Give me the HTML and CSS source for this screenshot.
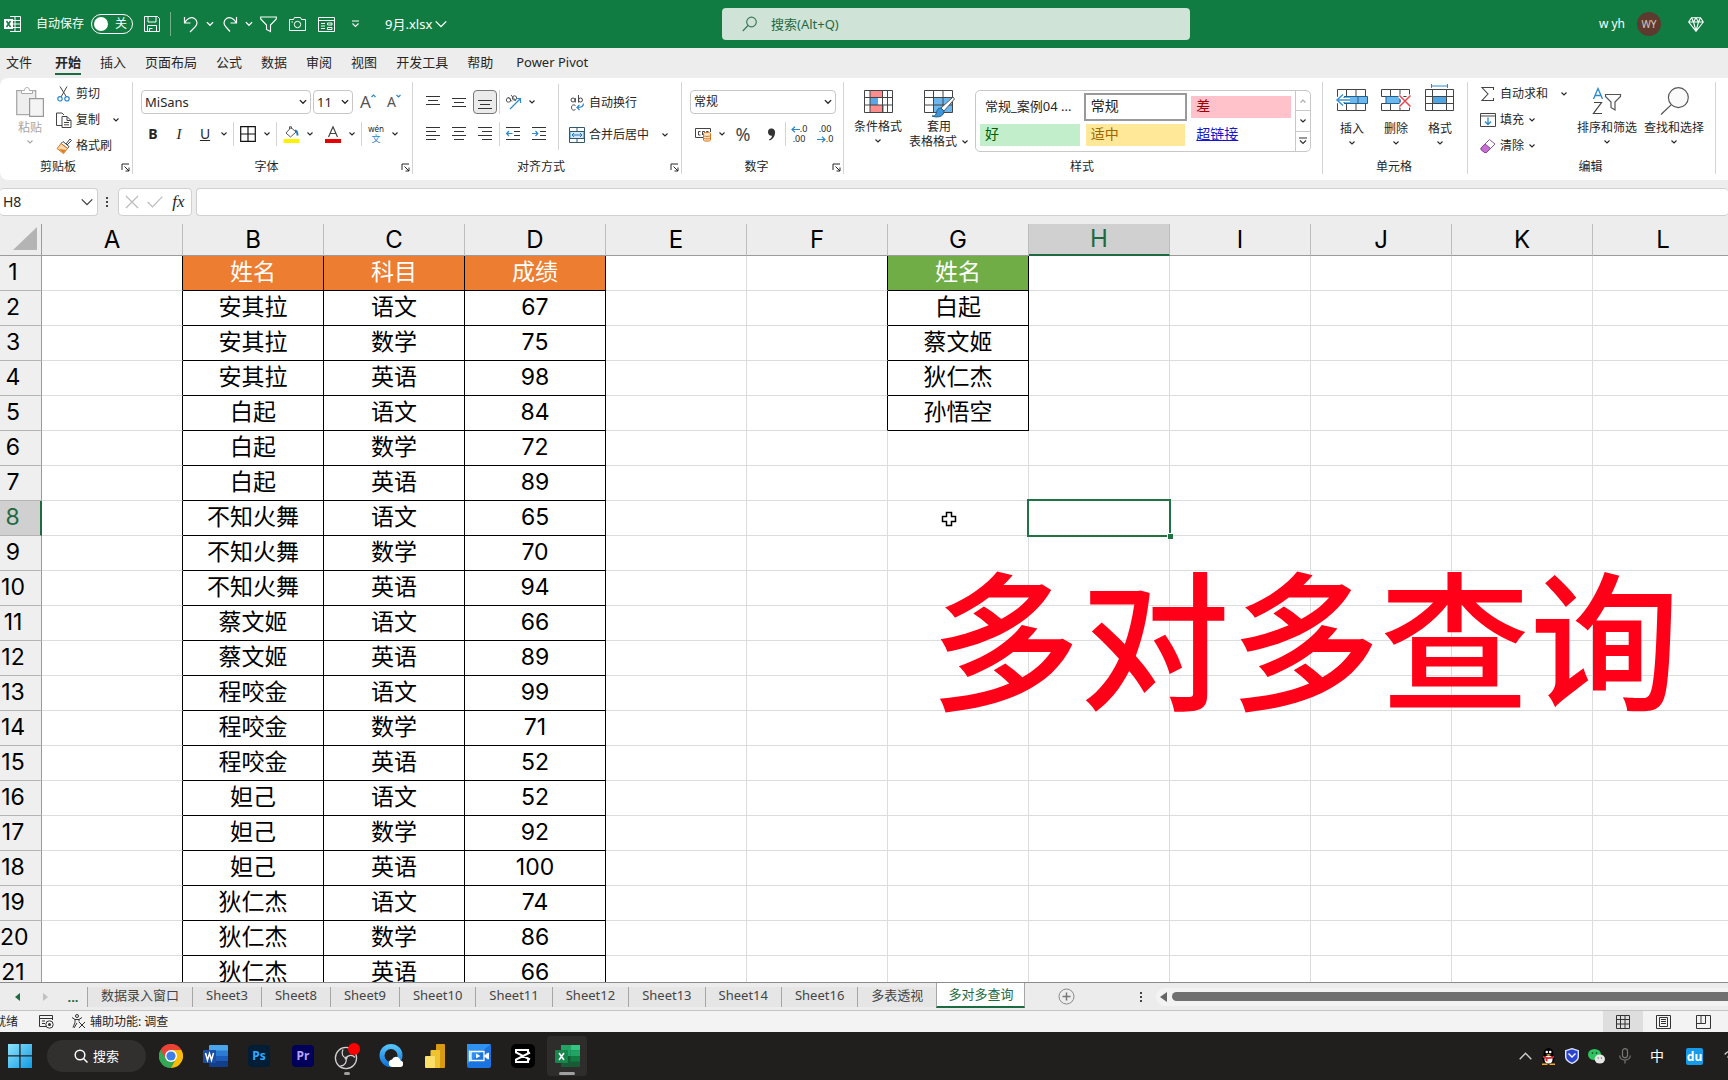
FILE: index.html
```
<!DOCTYPE html>
<html lang="zh-CN">
<head>
    <meta charset="UTF-8">
    <meta name="viewport" content="width=device-width, initial-scale=1.0">
    <title>9月.xlsx - Excel</title>
    <link rel="stylesheet" href="styles.css">
</head>
<body>

    <!-- Shared icon shapes -->
    <svg class="defs" width="0" height="0" aria-hidden="true">
        <symbol id="caret" viewBox="0 0 8 8"><path d="M1.500 2.500L4 5l2.500-2.500" fill="none" stroke="currentColor" stroke-width="1.100"/></symbol>
        <symbol id="launcher" viewBox="0 0 9 9"><path d="M1 7V1h7M3.500 3.500L8 8M8 4.500V8H4.500" fill="none" stroke="currentColor"/></symbol>
    </svg>

    <!-- Title bar -->
    <header class="title-bar">
        <svg class="app-logo" width="17" height="16" viewBox="0 0 17 16"><path d="M6 .5h10.500v15H6M6 4.500h10M6 8h10M6 11.500h10M11 .5v15" fill="none" stroke="#fff"/><path d="M0 3h9v10H0z" fill="#fff"/><path d="M2.500 5l4 6M6.500 5l-4 6" stroke="#107c41" stroke-width="1.500"/></svg>
        <label class="autosave">自动保存
            <input type="checkbox" class="autosave-box">
            <span class="toggle"><span class="knob"></span>关</span>
        </label>
        <div class="quick-access">
            <button aria-label="保存" class="qa save"><svg width="16" height="16" viewBox="0 0 16 16"><path d="M.5.500h13l2 2v13H.5zM4 .5V6h8V.5M3.500 15.500v-6h9v6M5.500 15.500v-3h3" fill="none" stroke="#fff"/></svg></button>
            <span class="qa-sep"></span>
            <button aria-label="撤消" class="qa"><svg width="16" height="17" viewBox="0 0 16 17"><path d="M1.500 1v6h6M1.500 7C4 2.500 8 .5 11.500 2.500c3.500 2.500 3 6 .5 8.500l-5 5" fill="none" stroke="#fff" stroke-width="1.200"/></svg></button>
            <button aria-label="撤消选项" class="qa-caret"><svg width="10" height="10" viewBox="0 0 8 8"><use href="#caret"/></svg></button>
            <button aria-label="恢复" class="qa"><svg width="16" height="17" viewBox="0 0 16 17"><path d="M14.500 1v6h-6M14.500 7C12 2.500 8 .5 4.500 2.500 1 5 1.500 8.500 4 11l4 4.500" fill="none" stroke="#fff" stroke-width="1.200"/></svg></button>
            <button aria-label="恢复选项" class="qa-caret"><svg width="10" height="10" viewBox="0 0 8 8"><use href="#caret"/></svg></button>
            <button aria-label="筛选" class="qa"><svg width="17" height="17" viewBox="0 0 17 17"><path d="M.7 1h15.600v2L10.500 9v6.500l-4-2V9L.7 3z" fill="none" stroke="#fff" stroke-width="1.100"/></svg></button>
            <button aria-label="照相机" class="qa"><svg width="17" height="14" viewBox="0 0 17 14"><path d="M.5 2.500h4l1-2h6l1 2h4v11H.5zM2.500 5h1.500" fill="none" stroke="#fff"/><circle cx="8.500" cy="7.500" r="3.200" fill="none" stroke="#fff"/></svg></button>
            <button aria-label="记录单" class="qa"><svg width="17" height="15" viewBox="0 0 17 15"><path d="M.5.500h16v14H.5zM.5 3.500h16M3 6.500h4M3 9h4M3 11.500h4M9.500 6h4.500v2H9.500zM9.500 10.500h4.500v2H9.500z" fill="none" stroke="#fff"/></svg></button>
            <button aria-label="自定义快速访问工具栏" class="qa"><svg width="9" height="8" viewBox="0 0 9 8"><path d="M1 1h7M1.500 3.500l3 3 3-3" fill="none" stroke="#fff" stroke-width="1.100"/></svg></button>
        </div>
        <button class="file-name">9月.xlsx <svg width="14" height="14" viewBox="0 0 8 8"><path d="M1 2.500l3 3 3-3" fill="none" stroke="#fff" stroke-width=".8"/></svg></button>
        <div class="search-wrap">
            <svg width="16" height="16" viewBox="0 0 16 16"><circle cx="9.500" cy="6" r="4.800" fill="none" stroke="#3a7c58" stroke-width="1.200"/><path d="M6 9.500L.8 15" stroke="#3a7c58" stroke-width="1.200"/></svg>
            <input type="search" class="search-box" aria-label="搜索" placeholder="搜索(Alt+Q)">
        </div>
        <div class="account">
            <span class="user">w yh</span>
            <span class="avatar">WY</span>
            <svg width="16" height="15" viewBox="0 0 16 15"><path d="M3.500.700h9L15.300 5 8 14.300.7 5zM.7 5h14.600M5.500 5L8 14M10.500 5L8 14M3.500.700L5.500 5 8 .7 10.500 5l2-4.300" fill="none" stroke="#fff" stroke-width="1.100"/></svg>
        </div>
    </header>

    <!-- Ribbon tabs -->
    <nav class="ribbon-tabs">
        <a href="#file" class="file-tab">文件</a>
        <a href="#home" class="active">开始</a>
        <a href="#insert">插入</a>
        <a href="#layout">页面布局</a>
        <a href="#formulas">公式</a>
        <a href="#data">数据</a>
        <a href="#review">审阅</a>
        <a href="#view">视图</a>
        <a href="#dev">开发工具</a>
        <a href="#help" class="help-tab">帮助</a>
        <a href="#pivot">Power Pivot</a>
    </nav>

    <!-- Ribbon -->
    <section class="ribbon">

        <div class="group clipboard">
            <div class="group-body">
                <button class="big-button paste" disabled>
                    <svg width="28" height="30" viewBox="0 0 28 30"><path d="M.7 3.700h19v24H.7z" fill="#eee" stroke="#aaa" stroke-width="1.300"/><path d="M5.500 6.500v-3h3c0-4 5-4 5 0h3v3z" fill="#fff" stroke="#aaa"/><path d="M13.600 11.600h13.800v17.800H13.600z" fill="#f4f4f4" stroke="#999" stroke-width="1.200"/></svg>
                    <span>粘贴</span>
                    <svg width="8" height="8"><use href="#caret"/></svg>
                </button>
                <div class="stack">
                    <button class="text-button"><svg width="16" height="16" viewBox="0 0 16 16"><path d="M4 .5l6.500 10.500M11 .5L5 11" stroke="#444" fill="none"/><circle cx="4" cy="12.800" r="2.200" fill="none" stroke="#2b88c9" stroke-width="1.200"/><circle cx="11" cy="12.800" r="2.200" fill="none" stroke="#2b88c9" stroke-width="1.200"/></svg>剪切</button>
                    <button class="text-button"><svg width="16" height="16" viewBox="0 0 16 16"><path d="M6 13.500H.5V1H6l2 2M6 4.500h5l4 4v7H6zM11 4.500v4h4M8 10.500h5M8 12.800h5" fill="none" stroke="#444"/></svg>复制<svg class="far" width="8" height="8"><use href="#caret"/></svg></button>
                    <button class="text-button"><svg width="16" height="16" viewBox="0 0 16 16"><path d="M10 6l4-5 1.500 1.500L11 7" fill="#fff" stroke="#444"/><path d="M7 3.500l6 5-1.500 2-6.500-5z" fill="#fff" stroke="#444"/><path d="M5 5.500l6.500 5-4 5L1 10.500C2.500 9 4 7 5 5.500z" fill="#fbd9b0" stroke="#d8741a"/><path d="M3 11l4.500 4 2.500-3z" fill="#e07b1c"/></svg>格式刷</button>
                </div>
            </div>
            <div class="group-name"><span>剪贴板</span><button aria-label="剪贴板设置"><svg width="9" height="9"><use href="#launcher"/></svg></button></div>
        </div>

        <div class="group font">
            <div class="group-body rows">
                <div class="row">
                    <span class="combo font-name"><select aria-label="字体"><option>MiSans</option></select><svg width="10" height="10" viewBox="0 0 8 8"><use href="#caret"/></svg></span>
                    <span class="combo font-size"><select aria-label="字号"><option>11</option></select><svg width="10" height="10" viewBox="0 0 8 8"><use href="#caret"/></svg></span>
                    <button class="icon-button grow" aria-label="增大字号"><span class="letter large">A</span><svg width="5" height="4" viewBox="0 0 5 4"><path d="M.5 3l2-2 2 2" fill="none" stroke="#2b88c9" stroke-width="1.200"/></svg></button>
                    <button class="icon-button grow" aria-label="减小字号"><span class="letter">A</span><svg width="5" height="4" viewBox="0 0 5 4"><path d="M.5 1l2 2 2-2" fill="none" stroke="#2b88c9" stroke-width="1.200"/></svg></button>
                </div>
                <div class="row">
                    <button class="icon-button bold">B</button>
                    <button class="icon-button italic">I</button>
                    <button class="icon-button underline">U</button>
                    <button class="drop" aria-label="下划线选项"><svg width="8" height="8"><use href="#caret"/></svg></button>
                    <span class="sep"></span>
                    <button class="icon-button" aria-label="边框"><svg width="16" height="16" viewBox="0 0 16 16"><path d="M.7.700h14.600v14.600H.7zM8 1v14M1 8h14" fill="none" stroke="#111" stroke-width="1.200"/></svg></button>
                    <button class="drop" aria-label="边框选项"><svg width="8" height="8"><use href="#caret"/></svg></button>
                    <span class="sep"></span>
                    <button class="icon-button" aria-label="填充颜色"><svg width="17" height="17" viewBox="0 0 17 17"><path d="M3 7l5-5.500L13 6l-5.500 5zM6.500 3V.8h2v2" fill="#fff" stroke="#555"/><path d="M12 4.500c2 0 2.500 2 2.500 5" fill="none" stroke="#2b78b8" stroke-width="2"/><path d="M.5 13h16v4H.5z" fill="#fff200"/></svg></button>
                    <button class="drop" aria-label="填充颜色选项"><svg width="8" height="8"><use href="#caret"/></svg></button>
                    <button class="icon-button font-color" aria-label="字体颜色"><svg width="16" height="17" viewBox="0 0 16 17"><path d="M3.500 11L8 .8 12.500 11M5 7.500h6" fill="none" stroke="#444" stroke-width="1.200"/><path d="M0 13h16v4H0z" fill="#e60000"/></svg></button>
                    <button class="drop" aria-label="字体颜色选项"><svg width="8" height="8"><use href="#caret"/></svg></button>
                    <span class="sep"></span>
                    <button class="icon-button phonetic"><span>wén</span><span class="blue">文</span></button>
                    <button class="drop" aria-label="拼音选项"><svg width="8" height="8"><use href="#caret"/></svg></button>
                </div>
            </div>
            <div class="group-name"><span>字体</span><button aria-label="字体设置"><svg width="9" height="9"><use href="#launcher"/></svg></button></div>
        </div>

        <div class="group align">
            <div class="group-body">
                <div class="rows align-icons">
                    <div class="row">
                        <button class="icon-button" aria-label="顶端对齐"><svg width="14" height="16" viewBox="0 0 14 16"><path d="M0 2.500h14M2 6.500h10M0 10.500h14" stroke="#333"/></svg></button>
                        <button class="icon-button" aria-label="垂直居中"><svg width="14" height="16" viewBox="0 0 14 16"><path d="M0 4.500h14M2 8.500h10M0 12.500h14" stroke="#333"/></svg></button>
                        <button class="icon-button pressed" aria-label="底端对齐"><svg width="14" height="16" viewBox="0 0 14 16"><path d="M0 6.500h14M2 10.500h10M0 14.500h14" stroke="#333"/></svg></button>
                        <span class="sep"></span>
                        <button class="icon-button" aria-label="方向"><svg width="17" height="16" viewBox="0 0 17 16"><g fill="none" stroke="#555"><circle cx="3.500" cy="6" r="2.200"/><path d="M3 3l4 4.500M6 1l5 6"/><circle cx="9.500" cy="4" r="2.200"/></g><path d="M5 15L15.500 4.500M11 4.500h4.500V9" fill="none" stroke="#2b88c9" stroke-width="1.200"/></svg></button>
                        <button class="drop" aria-label="方向选项"><svg width="8" height="8"><use href="#caret"/></svg></button>
                    </div>
                    <div class="row">
                        <button class="icon-button" aria-label="左对齐"><svg width="14" height="14" viewBox="0 0 14 14"><path d="M0 .5h14M0 4.500h10M0 8.500h14M0 12.500h10" stroke="#333"/></svg></button>
                        <button class="icon-button" aria-label="居中"><svg width="14" height="14" viewBox="0 0 14 14"><path d="M0 .5h14M2 4.500h10M0 8.500h14M2 12.500h10" stroke="#333"/></svg></button>
                        <button class="icon-button" aria-label="右对齐"><svg width="14" height="14" viewBox="0 0 14 14"><path d="M0 .5h14M4 4.500h10M0 8.500h14M4 12.500h10" stroke="#333"/></svg></button>
                        <span class="sep"></span>
                        <button class="icon-button" aria-label="减少缩进量"><svg width="14" height="14" viewBox="0 0 14 14"><path d="M0 .5h14M8 4.500h6M8 8.500h6M0 12.500h14" stroke="#333"/><path d="M6.500 6.500h-6M3 4L.7 6.500 3 9" fill="none" stroke="#2b88c9" stroke-width="1.200"/></svg></button>
                        <button class="icon-button" aria-label="增加缩进量"><svg width="14" height="14" viewBox="0 0 14 14"><path d="M0 .5h14M8 4.500h6M8 8.500h6M0 12.500h14" stroke="#333"/><path d="M0 6.500h6M3.500 4l2.300 2.500L3.500 9" fill="none" stroke="#2b88c9" stroke-width="1.200"/></svg></button>
                    </div>
                </div>
                <div class="rows wrap-merge">
                    <button class="text-button"><svg width="16" height="16" viewBox="0 0 16 16"><g fill="none" stroke="#444"><circle cx="4" cy="5" r="2"/><path d="M6.300 3v4.500M9.500 0v7.500M6.500 10.500c-2-1.500-4.500 0-4 2.500s2.500 2.500 4 1.500"/><circle cx="11.500" cy="5" r="2"/></g><path d="M14.500 8.500c0 3-2 4-6 4M10.500 10L8 12.500l2.500 2.500" fill="none" stroke="#2b88c9" stroke-width="1.200"/></svg>自动换行</button>
                    <button class="text-button"><svg width="16" height="16" viewBox="0 0 16 16"><path d="M1 4.500h14v7H1z" fill="#d3eafa" stroke="#2b88c9"/><path d="M.5.500h15v15H.5zM.5 4.500h15M.5 11.500h15M8 .5v4M8 11.500v4" fill="none" stroke="#33586e"/><path d="M3 8h10M5 6L3 8l2 2M11 6l2 2-2 2" fill="none" stroke="#2b78b8"/></svg>合并后居中<svg class="far" width="8" height="8"><use href="#caret"/></svg></button>
                </div>
            </div>
            <div class="group-name"><span>对齐方式</span><button aria-label="对齐设置"><svg width="9" height="9"><use href="#launcher"/></svg></button></div>
        </div>

        <div class="group number">
            <div class="group-body rows">
                <div class="row">
                    <span class="combo number-format"><select aria-label="数字格式"><option>常规</option></select><svg width="10" height="10" viewBox="0 0 8 8"><use href="#caret"/></svg></span>
                </div>
                <div class="row">
                    <button class="icon-button" aria-label="会计数字格式"><svg width="17" height="15" viewBox="0 0 17 15"><path d="M8 10.500H.5v-9h15V5M5.500 4.500H3.500v3.500h2M7.500 8V4.500h2V8M11.500 6V4.500h2" fill="none" stroke="#444"/><path d="M8.500 6.500c0-1.500 7-1.500 7 0v6.500c0 1.500-7 1.500-7 0z" fill="#fce4c8" stroke="#d8741a"/><path d="M8.500 8.500c0 1.200 7 1.200 7 0M8.500 11c0 1.200 7 1.200 7 0" fill="none" stroke="#d8741a"/></svg></button>
                    <button class="drop" aria-label="会计格式选项"><svg width="8" height="8"><use href="#caret"/></svg></button>
                    <button class="icon-button percent">%</button>
                    <button class="icon-button" aria-label="千位分隔样式"><svg width="9" height="13" viewBox="0 0 9 13"><path d="M4 .5c3 0 4.500 2 4 5-.5 3.500-2.500 6-5.500 7l-.5-1c2-1 3-2.200 3-3.700C2.500 8 1 6.500 1 4c0-2 1.200-3.500 3-3.500z" fill="#333"/></svg></button>
                    <span class="sep"></span>
                    <button class="icon-button decimals" aria-label="增加小数位数"><span><svg width="9" height="7" viewBox="0 0 9 7"><path d="M9 3.500H1M4 .7L1 3.500l3 2.800" fill="none" stroke="#2b88c9" stroke-width="1.200"/></svg>.0</span><span>.00</span></button>
                    <button class="icon-button decimals" aria-label="减少小数位数"><span>.00</span><span><svg width="9" height="7" viewBox="0 0 9 7"><path d="M0 3.500h8M5 .7l3 2.800-3 2.800" fill="none" stroke="#2b88c9" stroke-width="1.200"/></svg>.0</span></button>
                </div>
            </div>
            <div class="group-name"><span>数字</span><button aria-label="数字设置"><svg width="9" height="9"><use href="#launcher"/></svg></button></div>
        </div>

        <div class="group styles">
            <div class="group-body">
                <button class="big-button">
                    <svg width="29" height="24" viewBox="0 0 29 24"><path d="M6 1h12v6H6zM6 15h14v7H6z" fill="#ff8d8d"/><path d="M6 8h8v7H6z" fill="#5aa6e6"/><path d="M.5.500h28v22H.5zM.5 7.500h28M.5 15h28M6 .5v22M18.500.500v22M23.500.500v22" fill="none" stroke="#444"/></svg>
                    <span>条件格式</span>
                    <svg width="8" height="8"><use href="#caret"/></svg>
                </button>
                <button class="big-button">
                    <svg width="31" height="28" viewBox="0 0 31 28"><path d="M10 8h18v14H10z" fill="#6cb8ee"/><path d="M.5.500h28v22H.5zM.5 7.500h28M.5 15h28M9.500.500v22M19 .5v22" fill="none" stroke="#444"/><path d="M29 7L17 18l3 3L30.500 9z" fill="#fff" stroke="#555"/><path d="M17 18c-4 0-4 3-5 6-.5 1.500-2 2-4 2 5 2 12 1 12-5z" fill="#3c96d8" stroke="#255e88"/></svg>
                    <span>套用</span>
                    <span>表格格式 <svg width="8" height="8"><use href="#caret"/></svg></span>
                </button>
                <div class="gallery">
                    <div class="gallery-cells">
                        <button class="style-plain">常规_案例04 ...</button>
                        <button class="style-normal">常规</button>
                        <button class="style-bad">差</button>
                        <button class="style-good">好</button>
                        <button class="style-neutral">适中</button>
                        <button class="style-link">超链接</button>
                    </div>
                    <div class="gallery-scroll">
                        <button aria-label="向上" class="dim"><svg class="flip" width="8" height="8"><use href="#caret"/></svg></button>
                        <button aria-label="向下"><svg width="8" height="8"><use href="#caret"/></svg></button>
                        <button aria-label="其他"><svg width="8" height="8" viewBox="0 0 8 8"><path d="M0 1h8M1 3.500l3 3 3-3" fill="none" stroke="#333" stroke-width="1.200"/></svg></button>
                    </div>
                </div>
            </div>
            <div class="group-name"><span>样式</span></div>
        </div>

        <div class="group cells">
            <div class="group-body">
                <button class="big-button">
                    <svg width="32" height="28" viewBox="0 0 32 28"><path d="M1.500 3.500h28v21h-28zM10.500 3.500v21M20 3.500v21" fill="none" stroke="#444"/><path d="M8 10.500h23.500v7H8z" fill="#6cb8ee" stroke="#1f5f8c"/><path d="M22 10.500v7" stroke="#1f5f8c"/><path d="M14 14H1M7 8.500L1 14l6 5.500" fill="none" stroke="#fff" stroke-width="4"/><path d="M14 14H1M7 8.500L1 14l6 5.500" fill="none" stroke="#3c96d8" stroke-width="1.500"/></svg>
                    <span>插入</span>
                    <svg width="8" height="8"><use href="#caret"/></svg>
                </button>
                <button class="big-button">
                    <svg width="32" height="28" viewBox="0 0 32 28"><path d="M1.500 3.500h28v7h-28zM1.500 17.500h28v7h-28zM10.500 3.500v21M20 3.500v21" fill="none" stroke="#444"/><path d="M6 10.500h14v7H6z" fill="#6cb8ee" stroke="#1f5f8c"/><path d="M19.500 9.500l11 11M30.500 9.500l-11 11" stroke="#fff" stroke-width="4"/><path d="M19.500 9.500l11 11M30.500 9.500l-11 11" stroke="#e8484d" stroke-width="1.500"/></svg>
                    <span>删除</span>
                    <svg width="8" height="8"><use href="#caret"/></svg>
                </button>
                <button class="big-button">
                    <svg width="32" height="28" viewBox="0 0 32 28"><path d="M7.500 0h16M7.500-2v4M23.500-2v4" stroke="#2b88c9"/><path d="M1.500 3.500h28v21h-28z" fill="none" stroke="#444"/><path d="M8.500 10.500h14v7h-14z" fill="#4fa6e6"/><path d="M1.500 10.500h28M1.500 17.500h28M8.500 3.500v21M22.500 3.500v21" stroke="#444"/></svg>
                    <span>格式</span>
                    <svg width="8" height="8"><use href="#caret"/></svg>
                </button>
            </div>
            <div class="group-name"><span>单元格</span></div>
        </div>

        <div class="group editing">
            <div class="group-body">
                <div class="stack">
                    <button class="text-button"><svg width="16" height="16" viewBox="0 0 16 16"><path d="M13.500 4V1.500H2L8 8l-6 6.500h11.500V12" fill="none" stroke="#444" stroke-width="1.100"/></svg>自动求和<svg class="far" width="8" height="8"><use href="#caret"/></svg></button>
                    <button class="text-button"><svg width="16" height="16" viewBox="0 0 16 16"><path d="M.5 1.500h15v13H.5zM.5 4h15" fill="none" stroke="#444"/><path d="M8 5.500v7M5 9.500l3 3 3-3" fill="none" stroke="#2b88c9" stroke-width="1.300"/></svg>填充<svg class="near" width="8" height="8"><use href="#caret"/></svg></button>
                    <button class="text-button"><svg width="16" height="16" viewBox="0 0 16 16"><path d="M1 10L9.500 1.500 15 6 6.500 14.500H4.500L1 11.500z" fill="#fff" stroke="#8a5a96"/><path d="M1 10l4-4 5.500 4.500-4 4h-2L1 11.500z" fill="#c46fd0" stroke="#8f3fa0"/></svg>清除<svg class="near" width="8" height="8"><use href="#caret"/></svg></button>
                </div>
                <button class="big-button">
                    <svg width="30" height="28" viewBox="0 0 30 28"><path d="M1.500 12L6 1.500 10.500 12M3 8.500h6" fill="none" stroke="#2b88c9" stroke-width="1.300"/><path d="M2 15.500h7.500l-8 11H10" fill="none" stroke="#444" stroke-width="1.200"/><path d="M13.500 7.500h15v2l-5.500 5.500v8l-4-2.500V15l-5.500-5.500z" fill="#fff" stroke="#555" stroke-width="1.200"/></svg>
                    <span>排序和筛选</span>
                    <svg width="8" height="8"><use href="#caret"/></svg>
                </button>
                <button class="big-button">
                    <svg width="31" height="29" viewBox="0 0 31 29"><circle cx="19.500" cy="11" r="10.300" fill="#fafafa" stroke="#555" stroke-width="1.200"/><path d="M12 18.500L1.500 28.500" stroke="#555" stroke-width="1.300"/></svg>
                    <span>查找和选择</span>
                    <svg width="8" height="8"><use href="#caret"/></svg>
                </button>
            </div>
            <div class="group-name"><span>编辑</span></div>
        </div>
    </section>

    <!-- Formula bar -->
    <div class="formula-bar">
        <div class="name-box">
            <input type="text" aria-label="名称框" value="H8">
            <button aria-label="名称列表"><svg width="14" height="14" viewBox="0 0 8 8"><path d="M1 2.500l3 3 3-3" fill="none" stroke="#444" stroke-width=".8"/></svg></button>
        </div>
        <svg class="grip" width="3" height="12" viewBox="0 0 3 12"><path d="M0 1h2v2H0zM0 5h2v2H0zM0 9h2v2H0z" fill="#444"/></svg>
        <div class="formula-buttons">
            <button aria-label="取消"><svg width="14" height="14" viewBox="0 0 14 14"><path d="M1 1l12 12M13 1L1 13" stroke="#bbb" stroke-width="1.200"/></svg></button>
            <button aria-label="输入"><svg width="16" height="12" viewBox="0 0 16 12"><path d="M.7 6l4.800 5L15.300.700" fill="none" stroke="#bbb" stroke-width="1.200"/></svg></button>
            <button class="fx">fx</button>
        </div>
        <input type="text" class="formula-input" aria-label="编辑栏">
    </div>

    <!-- Sheet -->
    <main class="sheet">
        <table class="grid" id="grid">
            <thead></thead>
            <tbody></tbody>
        </table>
        <p class="caption">多对多查询</p>
        <svg class="pointer" width="16" height="16" viewBox="0 0 16 16"><path d="M5.500 1.500h5v4h4v5h-4v4h-5v-4h-4v-5h4z" fill="#fff" stroke="#000" stroke-width="1.500"/></svg>
    </main>

    <!-- Sheet tabs -->
    <nav class="sheet-tabs">
        <div class="sheet-nav">
            <button aria-label="上一个工作表"><svg width="5" height="8" viewBox="0 0 5 8"><path d="M5 0v8L0 4z" fill="#1e6b41"/></svg></button>
            <button aria-label="下一个工作表"><svg width="5" height="8" viewBox="0 0 5 8"><path d="M0 0v8l5-4z" fill="#c0c0c0"/></svg></button>
            <button class="dots">...</button>
        </div>
        <a href="#s1">数据录入窗口</a>
        <a href="#s3">Sheet3</a>
        <a href="#s8">Sheet8</a>
        <a href="#s9">Sheet9</a>
        <a href="#s10">Sheet10</a>
        <a href="#s11">Sheet11</a>
        <a href="#s12">Sheet12</a>
        <a href="#s13">Sheet13</a>
        <a href="#s14">Sheet14</a>
        <a href="#s16">Sheet16</a>
        <a href="#s17">多表透视</a>
        <a href="#s18" class="active">多对多查询</a>
        <button class="add-sheet" aria-label="新工作表"><svg width="17" height="17" viewBox="0 0 17 17"><circle cx="8.500" cy="8.500" r="7.500" fill="none" stroke="#888"/><path d="M8.500 4.500v8M4.500 8.500h8" stroke="#777" stroke-width="1.500"/></svg></button>
        <svg class="grip" width="3" height="12" viewBox="0 0 3 12"><path d="M0 1h2v2H0zM0 5h2v2H0zM0 9h2v2H0z" fill="#444"/></svg>
        <div class="scroll-track">
            <button aria-label="向左滚动"><svg width="7" height="10" viewBox="0 0 7 10"><path d="M7 0v10L0 5z" fill="#666"/></svg></button>
            <div class="scroll-thumb"></div>
        </div>
    </nav>

    <!-- Status bar -->
    <footer class="status-bar">
        <span class="ready">就绪</span>
        <svg width="15" height="14" viewBox="0 0 15 14"><path d="M7 11.500H.5V.5h13V5M.5 3.500h13M3 6h3M3 8.500h3" fill="none" stroke="#333"/><circle cx="10.500" cy="9.500" r="3.700" fill="#f3f3f3" stroke="#333"/><circle cx="10.500" cy="9.500" r="1.500" fill="#333"/></svg>
        <span class="access"><svg width="15" height="15" viewBox="0 0 15 15"><circle cx="6" cy="2" r="1.500" fill="none" stroke="#333"/><path d="M1 3.500l3 2v3l-2 5M11 3.500l-3 2v2M4 5.500h4M8 8l6 6M14 8l-6 6M6 9l-3 5" fill="none" stroke="#333"/></svg>辅助功能: 调查</span>
        <div class="views">
            <button class="active" aria-label="普通"><svg width="14" height="14" viewBox="0 0 14 14"><path d="M.5.500h13v13H.5zM.5 4.500h13M.5 9h13M4.500.500v13M9 .5v13" fill="none" stroke="#333"/></svg></button>
            <button aria-label="页面布局"><svg width="15" height="14" viewBox="0 0 15 14"><path d="M.5.500h14v13H.5zM3.500 2.500h8v9h-8zM5 4.500h5M5 6.500h5M5 8.500h5" fill="none" stroke="#333"/></svg></button>
            <button aria-label="分页预览"><svg width="15" height="14" viewBox="0 0 15 14"><path d="M.5.500h14v13H.5zM.5 8.500h9v-8M5 .5v8" fill="none" stroke="#333"/></svg></button>
        </div>
    </footer>

    <!-- Windows taskbar -->
    <div class="taskbar">
        <button class="start" aria-label="开始菜单"><svg width="24" height="24" viewBox="0 0 24 24"><defs><linearGradient id="win" x1="0" y1="0" x2="1" y2="1"><stop offset="0" stop-color="#8fe3fb"/><stop offset="1" stop-color="#109be4"/></linearGradient></defs><path d="M0 0h11.300v11.300H0zM12.600 0H24v11.300H12.600zM0 12.600h11.300V24H0zM12.600 12.600H24V24H12.600z" fill="url(#win)"/></svg></button>
        <button class="task-search"><svg width="14" height="14" viewBox="0 0 14 14"><circle cx="6" cy="6" r="4.800" fill="none" stroke="#fff" stroke-width="1.500"/><path d="M9.500 9.500l4 4" stroke="#fff" stroke-width="1.500"/></svg>搜索</button>
        <div class="apps">
            <button aria-label="Chrome"><svg width="24" height="24" viewBox="0 0 24 24"><path d="M12 12L1.600 6A12 12 0 0 1 22.400 6z" fill="#e94335"/><path d="M12 12V24A12 12 0 0 1 1.600 6z" fill="#34a853"/><path d="M12 12l10.400-6A12 12 0 0 1 12 24z" fill="#fbbc05"/><path d="M12 6h10.400L17 14.800 12 24z" fill="#fbbc05"/><path d="M1.600 6L7 15l5 3 5-3-5 9A12 12 0 0 1 1.600 6z" fill="#34a853"/><path d="M12 0A12 12 0 0 1 22.400 6H12L6.500 14.500 1.600 6A12 12 0 0 1 12 0z" fill="#e94335"/><circle cx="12" cy="12" r="6" fill="#fff"/><circle cx="12" cy="12" r="4.600" fill="#3f7ee8"/></svg></button>
            <button aria-label="Word"><svg width="25" height="22" viewBox="0 0 25 22"><path d="M7 0h17a1 1 0 0 1 1 1v5H6V1a1 1 0 0 1 1-1z" fill="#4aa5ea"/><path d="M6 5.500h19V11H6z" fill="#2b7cd3"/><path d="M6 11h19v5.500H6z" fill="#1b5cbd"/><path d="M6 16.500h19V21a1 1 0 0 1-1 1H7a1 1 0 0 1-1-1z" fill="#123f8c"/><rect y="5" width="13" height="13" rx="1" fill="#1a4fa3"/><path d="M2.500 8l2 7 2-6.500 2 6.500 2-7" fill="none" stroke="#fff" stroke-width="1.500"/></svg></button>
            <button class="adobe ps">Ps</button>
            <button class="adobe pr">Pr</button>
            <button class="running" aria-label="OBS"><svg width="26" height="28" viewBox="0 0 26 28"><g fill="none" stroke="#d0d0d0" stroke-width="1.300"><circle cx="12" cy="16" r="10.600" fill="#262424"/><path d="M12 16c-3.500-1-5-4.500-3-8.500M12 16c2.500-3.500 6.500-3.500 9-.5M12 16c1 4-1 7.500-5.500 8"/></g><circle cx="12" cy="16" r="1.500" fill="#d0d0d0"/><circle cx="20" cy="7" r="6" fill="#f00"/></svg></button>
            <button aria-label="QQ浏览器"><svg width="24" height="24" viewBox="0 0 24 24"><defs><linearGradient id="qb" x1="0" y1="0" x2="0" y2="1"><stop offset="0" stop-color="#52c0fa"/><stop offset="1" stop-color="#1376dc"/></linearGradient></defs><circle cx="12" cy="11.500" r="9" fill="none" stroke="url(#qb)" stroke-width="5"/><path d="M13 23a3.800 3.800 0 0 1 0-7.500 4.500 4.500 0 0 1 8.500 1A3.300 3.300 0 0 1 21.500 23z" fill="#fff"/></svg></button>
            <button aria-label="Power BI"><svg width="20" height="24" viewBox="0 0 20 24"><rect x="11" width="9" height="24" rx="1" fill="#d99a13"/><path d="M5.500 7a1 1 0 0 1 1-1H14a1 1 0 0 1 1 1v17H5.500z" fill="#efc32f"/><path d="M0 13a1 1 0 0 1 1-1h8a1 1 0 0 1 1 1v11H1a1 1 0 0 1-1-1z" fill="#fbdf68"/></svg></button>
            <button aria-label="录屏"><svg width="24" height="24" viewBox="0 0 24 24"><rect width="24" height="24" rx="2" fill="#1b74e0"/><path d="M0 0h24L0 20z" fill="#2f92f0"/><path d="M4 7.500h13v9H4zM2.500 6.500v11M20 10l-2 2 2 2z" fill="none" stroke="#fff" stroke-width="1.300"/><path d="M9 9.500v5l4.500-2.500zM19 10.500l3-2v7l-3-2z" fill="#fff"/></svg></button>
            <button aria-label="剪映"><svg width="24" height="24" viewBox="0 0 24 24"><rect width="24" height="24" rx="5" fill="#000"/><path d="M19 8.500L5 15.500V18h12v-2.500M19 15.500L5 8.500V6h12v2.500" fill="none" stroke="#fff" stroke-width="2"/></svg></button>
            <button class="running current" aria-label="Excel"><svg width="25" height="22" viewBox="0 0 25 22"><path d="M7 0h17a1 1 0 0 1 1 1v20a1 1 0 0 1-1 1H7a1 1 0 0 1-1-1z" fill="#185c37"/><path d="M6 0h9.500v11H6z" fill="#21a366"/><path d="M15.500 0H25v5.500h-9.500z" fill="#33c481"/><path d="M15.500 5.500H25V11h-9.500z" fill="#21a366"/><path d="M15.500 11H25v5.500h-9.500z" fill="#107c41"/><rect y="5" width="13" height="13" rx="1" fill="#17864a"/><path d="M4 8l5 7M9 8l-5 7" stroke="#fff" stroke-width="1.600"/></svg></button>
        </div>
        <div class="tray">
            <svg width="13" height="8" viewBox="0 0 13 8"><path d="M.7 7.300l5.800-6 5.800 6" fill="none" stroke="#ccc" stroke-width="1.400"/></svg>
            <svg width="15" height="17" viewBox="0 0 15 17"><ellipse cx="7.500" cy="6" rx="5" ry="6" fill="#000"/><ellipse cx="7.500" cy="10.500" rx="6" ry="5.500" fill="#000"/><ellipse cx="7.500" cy="11.500" rx="4" ry="4" fill="#fff"/><circle cx="5.800" cy="4" r="1.300" fill="#fff"/><circle cx="9.200" cy="4" r="1.300" fill="#fff"/><path d="M5 6.300h5l-2.500 1.500z" fill="#f6a821"/><path d="M2 7.800c3 1.800 8 1.800 11 0v2c-2 1-5 1.300-6.500 1.300v2.400l-2-.5V10.500L2 9.800z" fill="#e3242b"/><path d="M1 15.500h5.500V17H1zM8.500 15.500H14V17H8.500z" fill="#f6a821"/></svg>
            <svg width="14" height="16" viewBox="0 0 14 16"><path d="M7 .7l6.300 2v6c0 3-3 5.300-6.300 6.600C3.700 14 .7 11.700.7 8.700v-6z" fill="#2c45cf" stroke="#dfe5ff" stroke-width="1.400"/><path d="M3.500 5.500L7 9l3.500-3.500" fill="none" stroke="#fff" stroke-width="1.400"/></svg>
            <svg width="17" height="15" viewBox="0 0 17 15"><ellipse cx="6.500" cy="5.500" rx="6.500" ry="5.500" fill="#2fc45f"/><ellipse cx="11.800" cy="10" rx="5.200" ry="4.600" fill="#e6e6e6"/><circle cx="4.500" cy="4" r=".9" fill="#145c2b"/><circle cx="8.500" cy="4" r=".9" fill="#145c2b"/><circle cx="10.200" cy="9" r=".7" fill="#777"/><circle cx="13.400" cy="9" r=".7" fill="#777"/></svg>
            <svg class="mic" width="12" height="16" viewBox="0 0 12 16"><rect x="3.500" y=".7" width="5" height="9" rx="2.500" fill="none" stroke="#777" stroke-width="1.200"/><path d="M.7 7.500c0 6 10.600 6 10.600 0M6 12v3.500" fill="none" stroke="#777" stroke-width="1.200"/></svg>
            <span class="ime">中</span>
            <span class="du">du</span>
            <svg class="wifi" width="16" height="14" viewBox="0 0 16 14"><path d="M.7 5.500c4-5 10.600-5 14.600 0M3.500 8.500c2.500-3 6.500-3 9 0" fill="none" stroke="#ccc" stroke-width="1.400"/><circle cx="8" cy="12" r="1.500" fill="#ccc"/></svg>
        </div>
    </div>

    <script src="script.js"></script>

</body>
</html>
```

FILE: styles.css
```
* {
    box-sizing: border-box;
}
body {
    margin: 0;
    height: 100vh;
    display: flex;
    flex-direction: column;
    overflow: hidden;
    font-family: "Noto Sans", "Noto Sans CJK SC", sans-serif;
    font-size: 12px;
    line-height: 16px;
    color: #262626;
    background-color: #ededed;
}
button, input, select {
    font: inherit;
    color: inherit;
    margin: 0;
    padding: 0;
    border: none;
    background: none;
}
button {
    display: flex;
    align-items: center;
    justify-content: center;
    white-space: nowrap;
}
a {
    color: inherit;
    text-decoration: none;
    white-space: nowrap;
}
svg {
    display: block;
    flex: none;
}
.defs {
    position: absolute;
}

/* Title bar */
.title-bar {
    flex: none;
    display: flex;
    align-items: center;
    height: 48px;
    padding-left: 4px;
    color: white;
    background-color: #107c41;
}
.autosave {
    display: flex;
    align-items: center;
    gap: 7px;
    margin-left: 15px;
}
.autosave-box {
    position: absolute;
    opacity: 0;
}
.toggle {
    display: flex;
    align-items: center;
    gap: 7px;
    width: 42px;
    height: 20px;
    padding-left: 2px;
    border: 1px solid white;
    border-radius: 10px;
}
.knob {
    width: 14px;
    height: 14px;
    border-radius: 50%;
    background-color: white;
}
.quick-access {
    display: flex;
    align-items: center;
    margin-left: 6px;
}
.qa {
    width: 29px;
    height: 28px;
}
.qa.save {
    width: 26px;
}
.qa-caret {
    width: 10px;
    height: 28px;
}
.qa-sep {
    width: 1px;
    height: 24px;
    margin: 0 5px;
    background-color: #6fb08d;
}
.file-name {
    gap: 2px;
    margin-left: 15px;
    font-size: 13px;
}
.search-wrap {
    flex: 0 0 468px;
    display: flex;
    align-items: center;
    gap: 13px;
    height: 32px;
    margin-left: auto;
    padding-left: 20px;
    border-radius: 4px;
    background-color: #cfe3d7;
}
.search-box {
    flex: 1;
    height: 32px;
    font-size: 13px;
    outline: none;
}
.search-box::placeholder {
    color: #1f6b43;
    opacity: 1;
}
.account {
    flex: 0 0 538px;
    display: flex;
    align-items: center;
    justify-content: flex-end;
    padding-right: 24px;
}
.avatar {
    width: 24px;
    margin: 0 27px 0 12px;
    line-height: 24px;
    text-align: center;
    border-radius: 50%;
    color: #d8c8c0;
    background-color: #5e3a2e;
    font-size: 10px;
}

/* Ribbon tabs */
.ribbon-tabs {
    flex: none;
    display: flex;
    gap: 19px;
    height: 30px;
    padding: 4px 6px 0;
    font-size: 13px;
    line-height: 20px;
}
.file-tab, .help-tab {
    margin-right: 4px;
}
.ribbon-tabs .active {
    height: 23px;
    font-weight: bold;
    border-bottom: 2px solid #1e6b41;
}

/* Ribbon */
.ribbon {
    flex: none;
    display: flex;
    height: 102px;
    padding: 4px 0 6px;
    border-radius: 8px 0 0 8px;
    background-color: white;
}
.group {
    display: flex;
    flex-direction: column;
    flex: none;
    padding: 2px 0 0;
    border-right: 1px solid #d4d4d4;
}
.group-body {
    display: flex;
    height: 77px;
}
.group-name {
    display: flex;
    align-items: center;
    height: 14px;
    padding-right: 2px;
}
.group-name span {
    flex: 1;
    text-align: center;
}
.group-name button {
    width: 10px;
    height: 10px;
}
.clipboard { width: 133px; }
.font { width: 280px; }
.align { width: 269px; }
.number { width: 162px; }
.styles { width: 479px; }
.cells { width: 145px; }
.editing { width: 248px; }

.clipboard .group-name span {
    padding-right: 4px;
}
.rows {
    display: flex;
    flex-direction: column;
    gap: 6px;
    padding-top: 5px;
}
.row {
    display: flex;
    align-items: center;
    height: 26px;
}
.row .sep {
    width: 1px;
    height: 24px;
    margin: 0 1px 0 3px;
    background-color: #d4d4d4;
}
.icon-button {
    width: 26px;
    height: 24px;
}
.drop {
    width: 12px;
    height: 24px;
}
.pressed {
    width: 24px;
    margin: 0 1px;
    border: 1px solid #777;
    border-radius: 4px;
    background-color: #ebebeb;
}
.big-button {
    flex-direction: column;
    justify-content: flex-start;
    line-height: 15px;
}
.big-button > span {
    display: flex;
    align-items: center;
    gap: 4px;
}
.big-button > svg:last-child {
    margin-top: 3px;
}
.stack {
    display: flex;
    flex-direction: column;
    gap: 10px;
    padding-top: 2px;
}
.text-button {
    justify-content: flex-start;
    gap: 4px;
    height: 16px;
}
.text-button .far {
    margin-left: 8px;
}
.paste {
    width: 44px;
    margin: 3px 4px 0 8px;
    color: #a6a6a6;
}
.paste > span {
    margin-top: 3px;
}
.combo {
    display: flex;
    align-items: center;
    height: 24px;
    padding: 0 2px 0 3px;
    border: 1px solid #c8c8c8;
    border-radius: 4px;
}
.combo select {
    flex: 1;
    min-width: 0;
    appearance: none;
    outline: none;
}
.font-name {
    width: 170px;
    margin-right: 2px;
    font-size: 13px;
}
.font-size {
    width: 40px;
    margin-right: 2px;
    font-size: 13px;
}
.number-format {
    width: 146px;
}
.font .rows, .number .rows {
    padding-left: 8px;
}
.font .row + .row {
    margin-left: -1px;
}
.font-color {
    margin-left: 4px;
}
.grow {
    align-items: flex-start;
    padding-top: 4px;
}
.letter {
    font-size: 14px;
    color: #555;
}
.letter.large {
    font-size: 17px;
}
.bold {
    font-weight: bold;
    font-size: 14px;
}
.italic {
    font-family: "Liberation Serif", serif;
    font-style: italic;
    font-size: 15px;
}
.underline {
    font-size: 14px;
    text-decoration: underline;
}
.phonetic {
    flex-direction: column;
    font-size: 8px;
    line-height: 8px;
}
.phonetic .blue {
    color: #2b88c9;
    font-size: 9px;
    line-height: 11px;
}
.align-icons {
    width: 146px;
    height: 66px;
    padding-left: 7px;
    border-right: 1px solid #d4d4d4;
}
.align .sep, .number .sep {
    margin: 0 0 0 1px;
}
.wrap-merge {
    gap: 16px;
    padding: 11px 0 0 10px;
}
.percent {
    width: 30px;
    font-size: 18px;
    color: #444;
}
.decimals {
    flex-direction: column;
    font-size: 9px;
    line-height: 10px;
}
.decimals span {
    display: flex;
    align-items: center;
}

/* Styles group */
.styles .big-button {
    margin: 6px 7px 0 10px;
}
.styles .big-button + .big-button {
    margin: 6px 6px 0 0;
}
.styles .big-button > svg:first-child {
    margin-bottom: 5px;
}
.styles .big-button + .big-button > svg:first-child {
    margin-bottom: 1px;
}
.gallery {
    flex: 1;
    display: flex;
    height: 62px;
    margin: 6px 11px 0 0;
    border: 1px solid #c8c8c8;
    border-radius: 5px;
}
.gallery-cells {
    flex: 1;
    display: grid;
    grid-template-columns: repeat(3, 1fr);
    gap: 6px;
    padding: 5px 4px;
    font-size: 14px;
}
.gallery-cells button {
    justify-content: flex-start;
    padding: 0 0 2px 5px;
}
.gallery-cells .style-plain {
    font-size: 13px;
}
.gallery-cells .style-normal {
    margin: -3px -2px;
    border: 2px solid #999;
    color: #222;
}
.style-bad {
    color: #9c0006;
    background-color: #ffc2ca;
}
.style-good {
    color: #006100;
    background-color: #c3eecb;
}
.style-neutral {
    color: #9c6500;
    background-color: #ffe999;
}
.style-link {
    color: #1616d0;
    text-decoration: underline;
}
.gallery-scroll {
    width: 15px;
    display: flex;
    flex-direction: column;
    border-left: 1px solid #c8c8c8;
}
.gallery-scroll button {
    flex: 1;
}
.gallery-scroll button + button {
    border-top: 1px solid #c8c8c8;
}
.gallery-scroll .dim {
    color: #aaa;
}
.flip {
    transform: rotate(180deg);
}

/* Cells and editing groups */
.cells .group-body {
    gap: 12px;
    padding: 0 13px;
}
.cells .big-button {
    margin-top: 2px;
}
.cells .big-button > svg:first-child {
    margin-bottom: 7px;
    overflow: visible;
}
.editing .stack {
    width: 97px;
    margin-left: 12px;
}
.editing .big-button {
    width: 60px;
    margin: 3px 0 0;
}
.editing .big-button + .big-button {
    margin-left: 7px;
}
.editing .big-button > svg:first-child {
    height: 28px;
    margin-bottom: 5px;
}

/* Formula bar */
.formula-bar {
    flex: none;
    display: flex;
    align-items: center;
    height: 44px;
    font-size: 14px;
}
.name-box, .formula-buttons, .formula-input {
    height: 28px;
    border: 1px solid #d0d0d0;
    border-radius: 4px;
    background-color: white;
}
.name-box {
    width: 98px;
    display: flex;
    padding: 0 3px 0 3px;
    border-left: none;
}
.name-box input {
    flex: 1;
    min-width: 0;
    outline: none;
}
.formula-bar .grip {
    margin: 0 9px 0 8px;
}
.formula-buttons {
    display: flex;
    width: 74px;
    padding: 0 1px;
}
.formula-buttons button {
    flex: 1;
}
.formula-buttons .fx {
    font-family: "Liberation Serif", serif;
    font-style: italic;
    font-size: 17px;
}
.formula-input {
    flex: 1;
    margin-left: 4px;
    border-right: none;
    outline: none;
}

/* Sheet grid */
.sheet {
    position: relative;
    flex: 1;
    min-height: 0;
    overflow: hidden;
    background-color: white;
}
.grid {
    width: 1734px;
    table-layout: fixed;
    border-collapse: separate;
    border-spacing: 0;
    font-family: Inter, "Noto Sans CJK SC", sans-serif;
    font-size: 23px;
    line-height: 30px;
    color: black;
}
.grid th, .grid td {
    width: 141px;
    height: 35px;
    padding: 0 0 3px;
    text-align: center;
    font-weight: normal;
    border-right: 1px solid #dcdcdc;
    border-bottom: 1px solid #dcdcdc;
}
.grid thead th {
    height: 31px;
    padding: 0;
    font-size: 24px;
    border-right-color: #bdbdbd;
    border-bottom-color: #9b9b9b;
    background-color: #ededed;
}
.grid .corner {
    width: 42px;
    padding: 0 4px 3px 0;
    border-right-color: #9b9b9b;
}
.corner svg {
    margin-left: auto;
}
.grid tbody th {
    padding-right: 15px;
    border-right-color: #9b9b9b;
    border-bottom-color: #b4b4b4;
    background-color: #efefef;
}
.grid thead .picked {
    color: #1e6b41;
    border-bottom: 2px solid #1e6b41;
    background-color: #d0d0d0;
}
.grid tbody .picked {
    color: #1e6b41;
    border-right: 2px solid #1e6b41;
    background-color: #d0d0d0;
}
.grid .filled {
    border-right-color: black;
    border-bottom-color: black;
}
.grid .edge {
    border-right-color: black;
}
.grid .orange {
    color: white;
    background-color: #ed7d31;
}
.grid .green {
    color: white;
    background-color: #70ad47;
}
.selected {
    position: relative;
}
.selection {
    position: absolute;
    top: -2px;
    right: -2px;
    bottom: -2px;
    left: -2px;
    border: 2px solid #217346;
}
.handle {
    position: absolute;
    right: -4px;
    bottom: -4px;
    width: 6px;
    height: 6px;
    border: 1px solid white;
    border-width: 1px 0 0 1px;
    background-color: #217346;
}
.caption {
    position: absolute;
    top: 335px;
    left: 930px;
    margin: 0;
    font-family: "Noto Sans CJK SC", sans-serif;
    font-size: 150px;
    line-height: 150px;
    font-weight: 500;
    white-space: nowrap;
    color: #ff0018;
}
.pointer {
    position: absolute;
    top: 287px;
    left: 941px;
}

/* Sheet tabs */
.sheet-tabs {
    flex: none;
    display: flex;
    align-items: center;
    height: 28px;
    border-top: 1px solid #8c8c8c;
    font-size: 13px;
    line-height: 20px;
    color: #444;
    background-color: #ececec;
}
.sheet-nav {
    width: 88px;
    display: flex;
    height: 20px;
    padding: 0 0 0 3px;
    border-right: 1px solid #a6a6a6;
}
.sheet-nav button {
    flex: 1;
}
.dots {
    color: #1e6b41;
    font-weight: bold;
}
.sheet-tabs a {
    height: 20px;
    padding: 0 13px;
    line-height: 16px;
    border-right: 1px solid #a6a6a6;
    background-color: #e6e6e6;
}
.sheet-tabs .active {
    height: 25px;
    margin: 0 0 2px -1px;
    padding: 0 11px;
    line-height: 22px;
    color: #1e6b41;
    border-left: 1px solid #a6a6a6;
    border-bottom: 2px solid #1e6b41;
    background-color: white;
}
.add-sheet {
    margin-left: 33px;
}
.sheet-tabs .grip {
    margin-left: auto;
}
.scroll-track {
    flex: 0 0 572px;
    display: flex;
    align-items: center;
    gap: 5px;
    height: 18px;
    margin-left: 13px;
    padding-left: 4px;
    border-radius: 9px 0 0 9px;
    background-color: #f3f3f3;
}
.scroll-thumb {
    flex: 1;
    height: 9px;
    border-radius: 5px 0 0 5px;
    background-color: #707070;
}

/* Status bar */
.status-bar {
    flex: none;
    display: flex;
    align-items: center;
    height: 22px;
    border-top: 1px solid #c4c4c4;
    background-color: #f3f3f3;
}
.ready {
    margin: 0 21px 0 -6px;
}
.access {
    display: flex;
    align-items: center;
    gap: 4px;
    margin-left: 17px;
}
.views {
    display: flex;
    margin-left: auto;
    padding-right: 5px;
}
.views button {
    width: 40px;
    height: 21px;
}
.views .active {
    background-color: #dedede;
}

/* Taskbar */
.taskbar {
    flex: none;
    display: flex;
    align-items: center;
    height: 48px;
    color: white;
    background-color: #211f1e;
}
.start {
    width: 40px;
}
.task-search {
    gap: 5px;
    width: 99px;
    height: 32px;
    margin: 0 3px 0 7px;
    font-size: 13px;
    border-radius: 16px;
    background-color: #32302f;
}
.apps {
    display: flex;
}
.apps button {
    position: relative;
    width: 40px;
    height: 40px;
    margin: 0 2px;
    border-radius: 4px;
}
.apps .adobe {
    width: 22px;
    height: 22px;
    margin: 9px 11px;
    font-size: 12px;
    font-weight: bold;
}
.apps .ps {
    color: #31a8ff;
    background-color: #001e36;
}
.apps .pr {
    color: #b3a4ff;
    background-color: #00005b;
}
.apps .running::after {
    content: "";
    position: absolute;
    bottom: 1px;
    left: 17px;
    width: 6px;
    height: 3px;
    border-radius: 2px;
    background-color: #a0a0a0;
}
.apps .current {
    background-color: #2f2d2c;
}
.apps .current::after {
    left: 12px;
    width: 16px;
}
.tray {
    display: flex;
    align-items: center;
    gap: 9px;
    margin-left: auto;
    margin-right: -12px;
}
.mic {
    margin: 0 10px 0 5px;
}
.ime {
    font-size: 14px;
}
.du {
    width: 17px;
    margin: 0 12px 0 13px;
    line-height: 17px;
    text-align: center;
    font-weight: bold;
    border-radius: 2px;
    background-color: #159be9;
}
```

FILE: script.js
```
const columns = ["A", "B", "C", "D", "E", "F", "G", "H", "I", "J", "K", "L"];

const scores = [
    ["姓名", "科目", "成绩"],
    ["安其拉", "语文", 67],
    ["安其拉", "数学", 75],
    ["安其拉", "英语", 98],
    ["白起", "语文", 84],
    ["白起", "数学", 72],
    ["白起", "英语", 89],
    ["不知火舞", "语文", 65],
    ["不知火舞", "数学", 70],
    ["不知火舞", "英语", 94],
    ["蔡文姬", "语文", 66],
    ["蔡文姬", "英语", 89],
    ["程咬金", "语文", 99],
    ["程咬金", "数学", 71],
    ["程咬金", "英语", 52],
    ["妲己", "语文", 52],
    ["妲己", "数学", 92],
    ["妲己", "英语", 100],
    ["狄仁杰", "语文", 74],
    ["狄仁杰", "数学", 86],
    ["狄仁杰", "英语", 66]
];

const names = ["姓名", "白起", "蔡文姬", "狄仁杰", "孙悟空"];

const grid = document.getElementById("grid");

// Column headers
const headRow = grid.tHead.insertRow();
headRow.innerHTML = '<th class="corner"><svg width="24" height="23" viewBox="0 0 24 23"><path d="M24 0v23H0z" fill="#b4b4b4"/></svg></th>' +
    columns.map(c => `<th class="${c === "H" ? "picked" : ""}">${c}</th>`).join("");

// Data rows
scores.forEach((score, i) => {
    const row = grid.tBodies[0].insertRow();
    let html = `<th class="${i === 7 ? "picked" : ""}">${i + 1}</th>`;
    columns.forEach((c, j) => {
        let text = "";
        const classes = [];
        if (j >= 1 && j <= 3) {
            text = score[j - 1];
            classes.push("filled");
            if (i === 0) classes.push("orange");
        }
        if (c === "G" && i < names.length) {
            text = names[i];
            classes.push("filled");
            if (i === 0) classes.push("green");
        }
        if (c === "A" || (c === "F" && i < names.length)) classes.push("edge");
        if (c === "H" && i === 7) {
            classes.push("selected");
            text = '<span class="selection"></span><span class="handle"></span>';
        }
        html += `<td class="${classes.join(" ")}">${text}</td>`;
    });
    row.innerHTML = html;
});
```
